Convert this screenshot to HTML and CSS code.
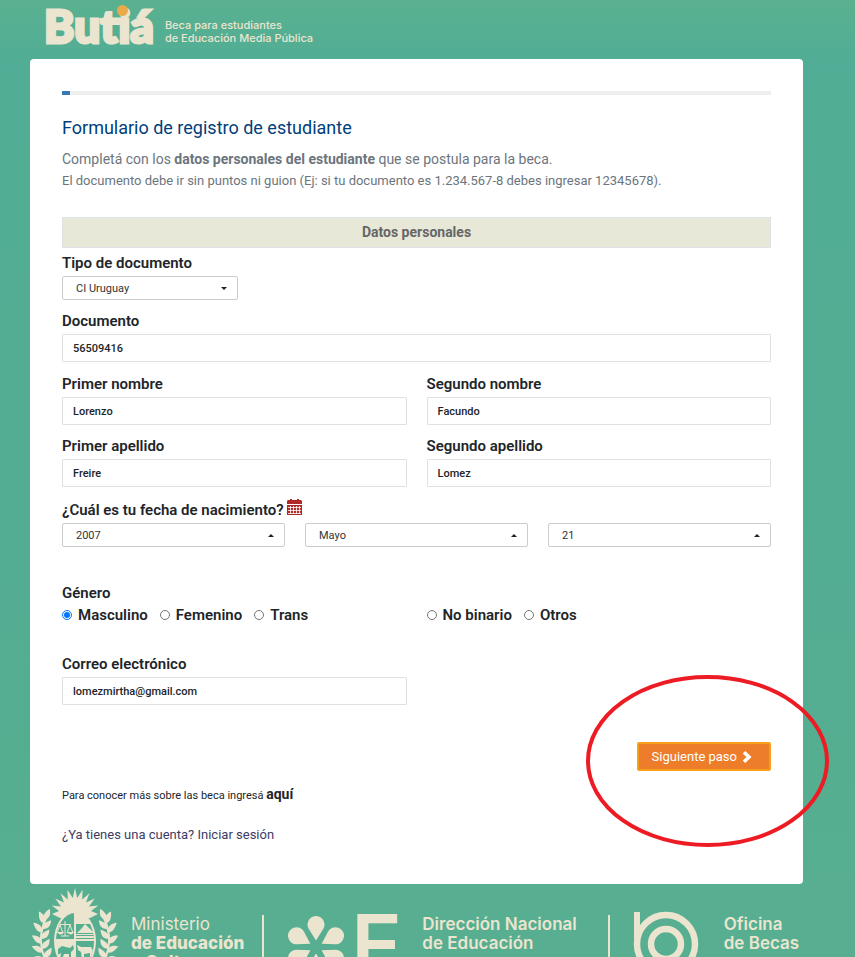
FILE: index.html
```html
<!DOCTYPE html>
<html lang="es">
<head>
    <meta charset="UTF-8">
    <meta name="viewport" content="width=device-width, initial-scale=1.0">
    <title>Butiá - Registro de estudiante</title>
    <link rel="stylesheet" href="styles.css">
</head>
<body>
    <header class="header">
        <div class="logo">Butiá<span class="logo-dot"></span></div>
        <p class="tagline">Beca para estudiantes<br>de Educación Media Pública</p>
    </header>

    <main class="card">
        <div class="progress"><div class="progress-bar" style="width: 1.1%"></div></div>
        <h1>Formulario de registro de estudiante</h1>
        <p class="intro">Completá con los <strong>datos personales del estudiante</strong> que se postula para la beca.</p>
        <p class="hint">El documento debe ir sin puntos ni guion (Ej: si tu documento es 1.234.567-8 debes ingresar 12345678).</p>

        <form class="form">
            <h2 class="section-title">Datos personales</h2>

            <div class="field field-type">
                <label for="tipo">Tipo de documento</label>
                <div class="select">
                    <select id="tipo"><option>CI Uruguay</option></select>
                </div>
            </div>

            <div class="field">
                <label for="documento">Documento</label>
                <input class="text" type="text" id="documento" value="56509416">
            </div>

            <div class="row">
                <div class="field">
                    <label for="nombre1">Primer nombre</label>
                    <input class="text" type="text" id="nombre1" value="Lorenzo">
                </div>
                <div class="field">
                    <label for="nombre2">Segundo nombre</label>
                    <input class="text" type="text" id="nombre2" value="Facundo">
                </div>
            </div>

            <div class="row">
                <div class="field">
                    <label for="apellido1">Primer apellido</label>
                    <input class="text" type="text" id="apellido1" value="Freire">
                </div>
                <div class="field">
                    <label for="apellido2">Segundo apellido</label>
                    <input class="text" type="text" id="apellido2" value="Lomez">
                </div>
            </div>

            <div class="birth">
                <label for="anio">¿Cuál es tu fecha de nacimiento?
                    <svg class="calendar" viewBox="0 0 15 17" width="15" height="17">
                        <path fill="#b02a2a" d="M1 1h2V0h2v1h5V0h2v1h2l1 1v3H0V2zM0 6h15v10H0z"/>
                        <path stroke="#fff" stroke-width=".8" d="M1 8.500h13M1 11.500h13M1 14.500h13M3.500 7v8M6.500 7v8M9.500 7v8M12.500 7v8"/>
                    </svg>
                </label>
                <div class="row">
                    <div class="select up"><select id="anio"><option>2007</option></select></div>
                    <div class="select up"><select id="mes" aria-label="Mes"><option>Mayo</option></select></div>
                    <div class="select up"><select id="dia" aria-label="Día"><option>21</option></select></div>
                </div>
            </div>

            <fieldset class="gender">
                <legend>Género</legend>
                <div class="row">
                    <div class="options">
                        <label><input type="radio" name="genero" checked>Masculino</label>
                        <label><input type="radio" name="genero">Femenino</label>
                        <label><input type="radio" name="genero">Trans</label>
                    </div>
                    <div class="options">
                        <label><input type="radio" name="genero">No binario</label>
                        <label><input type="radio" name="genero">Otros</label>
                    </div>
                </div>
            </fieldset>

            <div class="row">
                <div class="field">
                    <label for="correo">Correo electrónico</label>
                    <input class="text" type="email" id="correo" value="lomezmirtha@gmail.com">
                </div>
                <div class="field"></div>
            </div>

            <div class="actions">
                <div class="next">
                    <button type="submit">Siguiente paso
                        <svg viewBox="0 0 10 12" width="10" height="12"><path fill="none" stroke="#fff" stroke-width="3.500" d="M2 1.200L7 6L2 10.800"/></svg>
                    </button>
                    <svg class="ring" viewBox="0 0 243 172"><ellipse cx="121.500" cy="86" rx="119.500" ry="84"/></svg>
                </div>
            </div>
        </form>

        <p class="more">Para conocer más sobre las beca ingresá <a href="#">aquí</a></p>
        <p class="login"><a href="#">¿Ya tienes una cuenta? Iniciar sesión</a></p>
    </main>

    <footer class="footer">
        <div class="org ministry">
            <svg class="arms" viewBox="0 0 90 100" width="90" height="100">
                <defs>
                    <path id="leaf" d="M0 0C1 -4 5 -5 12 -4C9 1 5 3 0 0z"/>
                    <clipPath id="oval"><ellipse cx="45" cy="56" rx="19" ry="28"/></clipPath>
                    <g id="branch">
                        <path d="M17 31C10 45 8 60 16 76C22 87 31 94 42 96" fill="none" stroke="#ebe5d0" stroke-width="2"/>
                        <use href="#leaf" transform="translate(14 35) rotate(-45)"/>
                        <use href="#leaf" transform="translate(14 38) rotate(-95)"/>
                        <use href="#leaf" transform="translate(12 44) rotate(-25)"/>
                        <use href="#leaf" transform="translate(12 47) rotate(-115)"/>
                        <use href="#leaf" transform="translate(11 54) rotate(-30)"/>
                        <use href="#leaf" transform="translate(12 58) rotate(-125)"/>
                        <use href="#leaf" transform="translate(12 64) rotate(-35)"/>
                        <use href="#leaf" transform="translate(13 67) rotate(-135)"/>
                        <use href="#leaf" transform="translate(14 73) rotate(-35)"/>
                        <use href="#leaf" transform="translate(15 76) rotate(-145)"/>
                        <use href="#leaf" transform="translate(19 82) rotate(-30)"/>
                        <use href="#leaf" transform="translate(22 86) rotate(-175)"/>
                    </g>
                </defs>
                <g fill="#ebe5d0">
                    <path d="M45 3L47.200 13L52.600 4.700L52.200 14.500L59.400 8.200L56 17.500L64.800 13.600L59 21.500L68.300 20.400L61 26L68 29L60 33H30L22 29L29 26L21.700 20.400L31 21.500L25.200 13.600L34 17.500L30.600 8.200L37.800 14.500L37.400 4.700L42.800 13z"/>
                    <use href="#branch"/>
                    <use href="#branch" transform="translate(90 0) scale(-1 1)"/>
                    <ellipse cx="45" cy="56" rx="21" ry="30"/>
                </g>
                <g clip-path="url(#oval)">
                    <path fill="#56ae91" d="M24 26h20v28H24zM46 39h20v15H46zM46 56h20v31H46z"/>
                    <path fill="#ebe5d0" d="M47 48L52 43L55 39L59 43L65 48zM46 49h20v1H46zM46 51h20v2H46z"/>
                    <path fill="none" stroke="#ebe5d0" d="M35 36v15M31 51h8M29 39.500h12M30 40l-3 8M30 40l3 8M40 40l-3 8M40 40l3 8"/>
                    <path fill="#ebe5d0" d="M27 47h7q-3 5-7 0zM37 47h7q-3 5-7 0z"/>
                    <path fill="#56ae91" d="M28 64L32 61L40 63L43 60L44 64L41 67V75H39V69H34L32 75H30L31 68L28 70z"/>
                    <path fill="#ebe5d0" d="M47 60L51 62L61 62L63 66L62 74H60V68L54 69V74H52L51 67L48 65z"/>
                </g>
            </svg>
            <p class="org-name light">Ministerio<br><b>de Educación<br>y Cultura</b></p>
        </div>
        <div class="org direction">
            <svg class="flower" viewBox="-29 -32 58 64" width="58" height="64" fill="#ebe5d0">
                <defs><path id="petal" d="M0 -6.500L-7.200 -18A8.500 8.500 0 1 1 7.200 -18z"/></defs>
                <use href="#petal"/>
                <use href="#petal" transform="rotate(60)"/>
                <use href="#petal" transform="rotate(120)"/>
                <use href="#petal" transform="rotate(180)"/>
                <use href="#petal" transform="rotate(240)"/>
                <use href="#petal" transform="rotate(300)"/>
            </svg>
            <span class="letter">E</span>
            <p class="org-name">Dirección Nacional<br>de Educación</p>
        </div>
        <div class="org office">
            <svg class="office-mark" viewBox="0 0 66 66" width="66" height="66" fill="none" stroke="#ebe5d0">
                <path stroke-width="6" d="M4 1V34"/>
                <circle cx="33" cy="33" r="29" stroke-width="6.500"/>
                <circle cx="33" cy="33" r="15" stroke-width="6.500"/>
            </svg>
            <p class="org-name">Oficina<br>de Becas</p>
        </div>
    </footer>
</body>
</html>
```

FILE: styles.css
```css
:root {
    --cream: #ebe5d0;
    --text: #212529;
    --muted: #6c757d;
    --line: #dee2e6;
}

* {
    margin: 0;
    padding: 0;
    box-sizing: border-box;
}

html {
    height: 100%;
}

body {
    height: 100%;
    overflow: hidden auto;
    scrollbar-width: none;
    background: linear-gradient(#5ab190, #51ad95 60px, #53ad93 500px, #57ae90 880px);
    font-family: Roboto, sans-serif;
    color: var(--text);
}

a {
    color: inherit;
    text-decoration: none;
}

/* header */
.header {
    display: flex;
    height: 59px;
    padding-left: 44px;
    color: var(--cream);
}

.logo {
    position: relative;
    font-family: Lato, sans-serif;
    font-size: 46px;
    font-weight: 900;
    line-height: 52px;
    -webkit-text-stroke: 3px var(--cream);
}

.logo-dot {
    position: absolute;
    top: 5px;
    left: 73px;
    width: 11px;
    height: 11px;
    border-radius: 50%;
    background: #e9aa4c;
}

.tagline {
    margin: 19px 0 0 11px;
    font-family: Inter, sans-serif;
    font-size: 11px;
    font-weight: 500;
    line-height: 13px;
}

/* card */
.card {
    margin: 0 52px 0 30px;
    padding: 32px 32px 39px;
    border-radius: 4px;
    background: #fff;
}

.progress {
    height: 4px;
    background: #eee;
}

.progress-bar {
    height: 4px;
    background: #337ab7;
}

h1 {
    margin-top: 20px;
    font-size: 18px;
    font-weight: 400;
    line-height: 26px;
    color: #00407a;
}

.intro,
.hint {
    color: var(--muted);
    line-height: 22px;
}

.intro {
    margin-top: 7px;
    font-size: 14px;
}

.hint {
    font-size: 13px;
}

.section-title {
    margin: 25px 0 5px;
    border: 1px solid var(--line);
    background: #e8e8d8;
    font-size: 14px;
    font-weight: 700;
    line-height: 29px;
    text-align: center;
    color: #666;
}

label,
legend {
    display: block;
    font-size: 15px;
    font-weight: 600;
    line-height: 20px;
}

.row {
    display: flex;
    gap: 20px;
}

.row > * {
    flex: 1;
}

.field {
    margin-bottom: 12px;
}

.field-type,
.row .field {
    margin-bottom: 11px;
}

.field-type .select {
    width: 176px;
}

.text {
    display: block;
    width: 100%;
    height: 28px;
    margin-top: 3px;
    padding: 0 10px;
    border: 1px solid var(--line);
    border-radius: 1px;
    font-family: inherit;
    font-size: 11px;
    font-weight: 500;
    color: var(--text);
}

.select {
    position: relative;
    margin-top: 3px;
}

.select select {
    display: block;
    width: 100%;
    height: 24px;
    padding: 0 13px;
    border: 1px solid #ccc;
    border-radius: 2px;
    appearance: none;
    background: #fff;
    font-family: inherit;
    font-size: 11px;
    color: #333;
}

.select::after {
    content: "";
    position: absolute;
    top: 11px;
    right: 11px;
    border: 3px solid transparent;
    border-top-color: #222;
    border-bottom: 0;
}

.select.up::after {
    border-top: 0;
    border-bottom: 3px solid #222;
}

.birth {
    padding-top: 1px;
}

.calendar {
    display: inline-block;
    height: 17px;
    vertical-align: -1px;
}

/* gender */
.gender {
    margin-top: 36px;
    border: 0;
}

.gender legend {
    margin-bottom: 2px;
}

.options {
    display: flex;
    gap: 12px;
}

.options label {
    display: flex;
    align-items: center;
    gap: 6px;
}

.options input {
    width: 10px;
    height: 10px;
}

.gender + .row {
    margin-top: 29px;
}

.actions {
    display: flex;
    justify-content: flex-end;
    margin-top: 26px;
}

.next {
    position: relative;
}

.next button {
    display: flex;
    align-items: center;
    gap: 5px;
    height: 29px;
    padding: 0 17px 0 13px;
    border: 2px solid #f9a01b;
    border-radius: 2px;
    background: #ed7d2b;
    font-family: inherit;
    font-size: 13px;
    color: #fff;
}

.ring {
    position: absolute;
    top: -67px;
    left: -51px;
    width: 243px;
    height: 172px;
    fill: none;
    stroke: #ed1c24;
    stroke-width: 4;
    pointer-events: none;
}

.more {
    margin-top: 13px;
    font-size: 11px;
    line-height: 20px;
}

.more a {
    font-size: 14px;
    font-weight: 700;
}

.login {
    margin-top: 19px;
    font-size: 13px;
    line-height: 20px;
    color: #3c3c64;
}

/* footer */
.footer {
    display: flex;
    padding: 1px 30px 20px;
    color: var(--cream);
}

.org {
    display: flex;
}

.org-name {
    font-family: Inter, sans-serif;
    font-size: 17px;
    font-weight: 600;
    line-height: 19px;
    white-space: nowrap;
}

.light {
    font-weight: 400;
}

.org-name b {
    font-weight: 800;
}

.ministry {
    gap: 11px;
}

.ministry .org-name {
    margin-top: 30px;
}

.direction,
.office {
    margin-top: 30px;
    padding-left: 23px;
    border-left: 2px solid var(--cream);
}

.direction {
    margin-left: 18px;
}

.letter {
    width: 77px;
    padding-left: 6px;
    font-family: Inter, sans-serif;
    font-size: 84px;
    font-weight: 600;
    line-height: 60px;
}

.office {
    gap: 25px;
    margin-left: 31px;
}

.office-mark {
    margin-top: -4px;
}
```
